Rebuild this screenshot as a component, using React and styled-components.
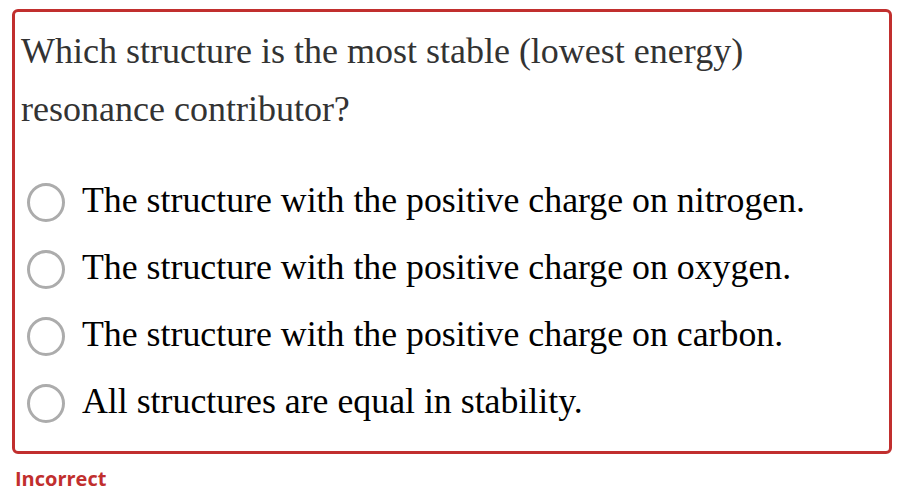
import React from "react";
import styled, { createGlobalStyle } from "styled-components";

const Global = createGlobalStyle`
  html, body { margin: 0; padding: 0; background: #ffffff; }
  * { box-sizing: border-box; }
`;

const Page = styled.div`
  padding: 9px 0 0 12px;
`;

const QuestionBox = styled.div`
  width: 880px;
  height: 445px;
  border: 3px solid #c12f2e;
  border-radius: 6px;
  padding: 10px 0 0 6px;
  display: flex;
  flex-direction: column;
`;

const Prompt = styled.p`
  margin: 0;
  font-family: "Liberation Serif", "Times New Roman", serif;
  font-size: 36px;
  line-height: 58px;
  color: #333333;
  max-width: 780px;
`;

const Options = styled.div`
  margin-top: 29px;
  padding-left: 6px;
  display: flex;
  flex-direction: column;
`;

const Option = styled.label`
  display: flex;
  align-items: center;
  height: 67px;
  cursor: pointer;
`;

const Radio = styled.span`
  width: 38px;
  height: 39px;
  margin-top: 4px;
  border: 3px solid #acacac;
  border-radius: 50%;
  background: #ffffff;
  flex: none;
`;

const OptionText = styled.span`
  margin-left: 17px;
  font-family: "Liberation Serif", "Times New Roman", serif;
  font-size: 35.8px;
  line-height: 67px;
  color: #000000;
`;

const Feedback = styled.div`
  margin-top: 11px;
  padding-left: 3px;
  font-family: "Open Sans", sans-serif;
  font-weight: 700;
  font-size: 20px;
  line-height: 28px;
  color: #c12f2e;
`;

const options = [
  "The structure with the positive charge on nitrogen.",
  "The structure with the positive charge on oxygen.",
  "The structure with the positive charge on carbon.",
  "All structures are equal in stability.",
];

export default function App() {
  return (
    <Page>
      <Global />
      <QuestionBox>
        <Prompt>
          Which structure is the most stable (lowest energy) resonance contributor?
        </Prompt>
        <Options>
          {options.map((o) => (
            <Option key={o}>
              <Radio />
              <OptionText>{o}</OptionText>
            </Option>
          ))}
        </Options>
      </QuestionBox>
      <Feedback>Incorrect</Feedback>
    </Page>
  );
}
